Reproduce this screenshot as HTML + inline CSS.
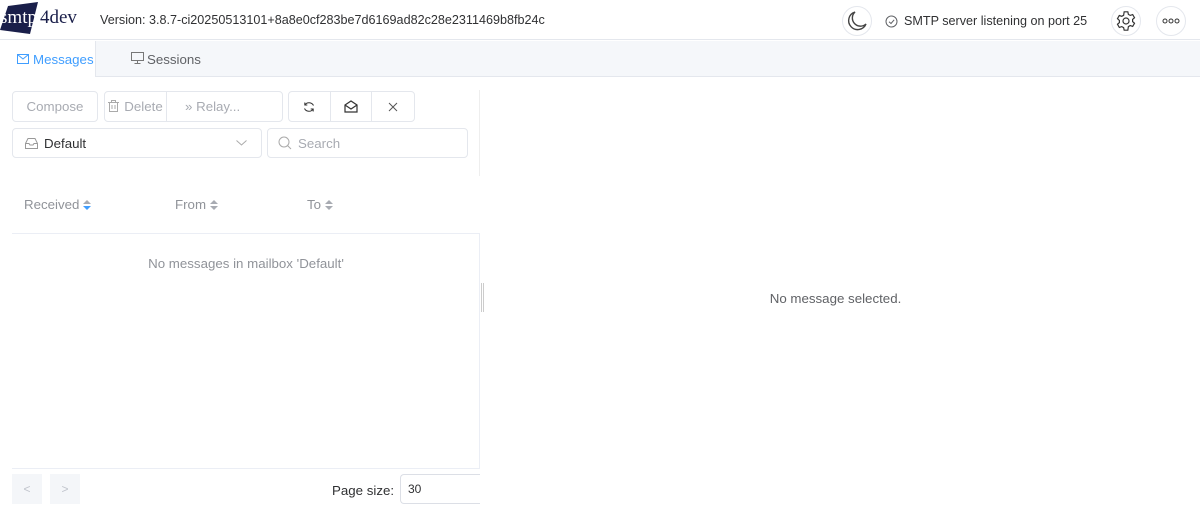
<!DOCTYPE html>
<html><head><meta charset="utf-8"><style>
*{box-sizing:border-box;margin:0;padding:0}
body{width:1200px;height:517px;overflow:hidden;background:#fff;font-family:"Liberation Sans",sans-serif;color:#606266;font-size:13.3px;position:relative}
.a{position:absolute;white-space:nowrap}
.btn{position:absolute;border:1px solid #e4e7ed;border-radius:4px;color:#a8abb2;display:flex;align-items:center;justify-content:center;background:#fff;white-space:nowrap}
.circ{position:absolute;width:30px;height:30px;border:1px solid #e4e7ed;border-radius:50%;display:flex;align-items:center;justify-content:center}
.sort{display:inline-block;vertical-align:middle;margin-left:4px}
</style></head><body>
<div class="a" style="left:0;top:0;width:1200px;height:40px;border-bottom:1px solid #e4e7ed"></div>
<svg class="a" style="left:0;top:2px" width="92" height="34"><polygon points="8,4 38,0 30,32 0,28" fill="#1a1f4a"/><text x="0" y="21" font-family="Liberation Serif" font-size="19" fill="#fff" textLength="37" lengthAdjust="spacingAndGlyphs">smtp</text><text x="40" y="21" font-family="Liberation Serif" font-size="19" fill="#1a1f4a">4dev</text></svg>
<div class="a" style="left:100px;top:13px;font-size:12.6px;color:#303133">Version: 3.8.7-ci20250513101+8a8e0cf283be7d6169ad82c28e2311469b8fb24c</div>
<div class="circ" style="left:842px;top:6px"><svg width="22" height="22" viewBox="0 0 22 22"><path d="M9 2A9 9 0 1 0 20 14A8 8 0 0 1 9 2Z" fill="none" stroke="#444" stroke-width="1.4"/></svg></div>
<svg class="a" style="left:885px;top:15px" width="13" height="13"><circle cx="6.5" cy="6.5" r="5.5" fill="none" stroke="#606266"/><path d="M4 6.7L6 8.5L9.2 4.8" fill="none" stroke="#606266"/></svg>
<div class="a" style="left:904px;top:14px;font-size:12.6px;color:#303133">SMTP server listening on port 25</div>
<div class="circ" style="left:1111px;top:6px"><svg width="22" height="22" viewBox="0 0 24 24"><path d="M10 2h4l.6 2.8 2 1.1 2.7-.9 2 3.4-2.1 1.9v2.3l2.1 1.9-2 3.4-2.7-.9-2 1.1L14 22h-4l-.6-2.8-2-1.1-2.7.9-2-3.4 2.1-1.9v-2.3L2.7 9.4l2-3.4 2.7.9 2-1.1Z" fill="none" stroke="#333" stroke-width="1.3"/><circle cx="12" cy="12" r="3.3" fill="none" stroke="#333" stroke-width="1.3"/></svg></div>
<div class="circ" style="left:1156px;top:6px"><svg width="18" height="6"><circle cx="3" cy="3" r="2" fill="none" stroke="#333"/><circle cx="9" cy="3" r="2" fill="none" stroke="#333"/><circle cx="15" cy="3" r="2" fill="none" stroke="#333"/></svg></div>
<div class="a" style="left:0;top:41px;width:1200px;height:36px;background:#f5f7fa;border-bottom:1px solid #e4e7ed"></div>
<div class="a" style="left:0;top:41px;width:96px;height:36px;background:#fff;border-right:1px solid #e4e7ed"></div>
<svg class="a" style="left:17px;top:54px" width="12" height="10"><rect x=".5" y=".5" width="11" height="9" fill="none" stroke="#409eff"/><path d="M.5 .5L6 5L11.5 .5" fill="none" stroke="#409eff"/></svg>
<div class="a" style="left:33px;top:52px;color:#409eff">Messages</div>
<svg class="a" style="left:131px;top:52px" width="13" height="12"><rect x=".5" y=".5" width="12" height="8" fill="none" stroke="#777"/><path d="M6.5 9v2M3.5 11.5h6" stroke="#777"/></svg>
<div class="a" style="left:147px;top:52px;color:#606266">Sessions</div>
<div class="btn" style="left:12px;top:91px;width:86px;height:31px">Compose</div>
<div class="btn" style="left:104px;top:91px;width:179px;height:31px;justify-content:flex-start"><span style="width:62px;text-align:center;border-right:1px solid #e4e7ed;line-height:29px"><svg width="11" height="12" style="vertical-align:-1px;margin-right:5px"><path d="M0 2.5h11M3.5 2.5V.5h4v2M1.5 2.5v9h8v-9M4 5v4M7 5v4" fill="none" stroke="#aaa"/></svg>Delete</span><span style="padding-left:18px">» Relay...</span></div>
<div class="btn" style="left:288px;top:91px;width:127px;height:31px;justify-content:flex-start;color:#333">
<span style="width:42px;border-right:1px solid #e4e7ed;height:29px;display:flex;align-items:center;justify-content:center"><svg width="12" height="12"><path d="M10.5 4.5A5 5 0 0 0 1.8 4M1.5 7.5A5 5 0 0 0 10.2 8M1.8 1.5V4H4.3M10.2 10.5V8H7.7" fill="none" stroke="#333"/></svg></span><span style="width:42px;border-right:1px solid #e4e7ed;height:29px;display:flex;align-items:center;justify-content:center"><svg width="14" height="13"><path d="M1 5L7 1L13 5V12H1Z M1 5L7 9L13 5" fill="none" stroke="#333" stroke-width="1.2"/></svg></span><span style="width:42px;display:flex;justify-content:center"><svg width="10" height="10"><path d="M1 1L9 9M9 1L1 9" stroke="#555"/></svg></span></div>
<div class="btn" style="left:12px;top:128px;width:250px;height:30px;justify-content:flex-start;color:#303133;padding-left:12px"><svg width="13" height="11" style="margin-right:6px"><path d="M.5 5.5L3 .5h7l2.5 5v5H.5Z M.5 5.5H4l1 1.5h3l1-1.5h3.5" fill="none" stroke="#999"/></svg>Default<svg width="11" height="6" style="position:absolute;right:14px"><path d="M.5 .5L5.5 5L10.5 .5" fill="none" stroke="#aaa"/></svg></div>
<div class="btn" style="left:267px;top:128px;width:201px;height:30px;justify-content:flex-start;padding-left:10px"><svg width="14" height="14" style="margin-right:6px"><circle cx="6" cy="6" r="5" fill="none" stroke="#aaa"/><path d="M9.5 9.5L13 13" stroke="#aaa"/></svg>Search</div>
<div class="a" style="left:479px;top:90px;width:1px;height:86px;background:#eee"></div>
<div class="a" style="left:24px;top:197px;color:#909399">Received<svg class="sort" width="8" height="12"><path d="M0 5L4 1L8 5Z" fill="#a8abb2"/><path d="M0 7L4 11L8 7Z" fill="#409eff"/></svg></div>
<div class="a" style="left:175px;top:197px;color:#909399">From<svg class="sort" width="8" height="12"><path d="M0 5L4 1L8 5ZM0 7L4 11L8 7Z" fill="#a8abb2"/></svg></div>
<div class="a" style="left:307px;top:197px;color:#909399">To<svg class="sort" width="8" height="12"><path d="M0 5L4 1L8 5ZM0 7L4 11L8 7Z" fill="#a8abb2"/></svg></div>
<div class="a" style="left:12px;top:233px;width:468px;height:1px;background:#ebeef5"></div>
<div class="a" style="left:479px;top:233px;width:1px;height:236px;background:#ebeef5"></div>
<div class="a" style="left:12px;top:256px;width:468px;text-align:center;color:#909399">No messages in mailbox 'Default'</div>
<div class="a" style="left:481px;top:283px;width:3px;height:29px;border-left:1px solid #ccc;border-right:1px solid #ccc"></div>
<div class="a" style="left:484px;top:291px;width:703px;text-align:center;color:#606266">No message selected.</div>
<div class="a" style="left:12px;top:468px;width:468px;height:1px;background:#ebeef5"></div>
<div class="a" style="left:12px;top:474px;width:30px;height:30px;background:#f4f6f9;color:#c0c4cc;text-align:center;line-height:30px;font-size:12px">&lt;</div>
<div class="a" style="left:50px;top:474px;width:30px;height:30px;background:#f4f6f9;color:#c0c4cc;text-align:center;line-height:30px;font-size:12px">&gt;</div>
<div class="a" style="left:332px;top:483px;color:#303133">Page size:</div>
<div class="a" style="left:400px;top:474px;width:80px;height:30px;border:1px solid #dcdfe6;border-right:none;border-radius:4px 0 0 4px;padding-left:7px;line-height:28px;font-size:12px;color:#303133">30</div>
</body></html>
